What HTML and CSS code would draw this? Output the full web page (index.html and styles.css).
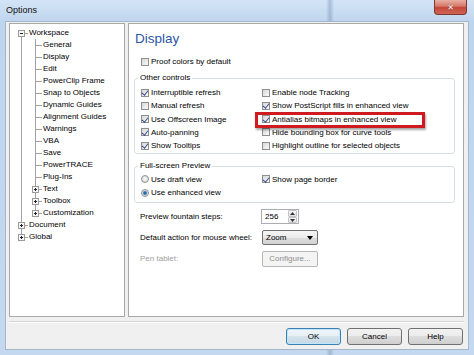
FILE: index.html
```html
<!DOCTYPE html>
<html>
<head>
<meta charset="utf-8">
<title>Options</title>
<link rel="stylesheet" href="styles.css">
</head>
<body>
<div class="window">
  <div class="titlebar">
    <span class="title">Options</span>
    <div class="close"><span>✕</span></div>
  </div>
  <div class="client">
    <div class="main">
      <div class="tree">
        <div class="row"><span class="cell c-first"><span class="exp minus"></span></span><span class="lbl">Workspace</span></div>
        <div class="row"><span class="cell c-i"></span><span class="cell c-t"></span><span class="lbl">General</span></div>
        <div class="row"><span class="cell c-i"></span><span class="cell c-t"></span><span class="lbl">Display</span></div>
        <div class="row"><span class="cell c-i"></span><span class="cell c-t"></span><span class="lbl">Edit</span></div>
        <div class="row"><span class="cell c-i"></span><span class="cell c-t"></span><span class="lbl">PowerClip Frame</span></div>
        <div class="row"><span class="cell c-i"></span><span class="cell c-t"></span><span class="lbl">Snap to Objects</span></div>
        <div class="row"><span class="cell c-i"></span><span class="cell c-t"></span><span class="lbl">Dynamic Guides</span></div>
        <div class="row"><span class="cell c-i"></span><span class="cell c-t"></span><span class="lbl">Alignment Guides</span></div>
        <div class="row"><span class="cell c-i"></span><span class="cell c-t"></span><span class="lbl">Warnings</span></div>
        <div class="row"><span class="cell c-i"></span><span class="cell c-t"></span><span class="lbl">VBA</span></div>
        <div class="row"><span class="cell c-i"></span><span class="cell c-t"></span><span class="lbl">Save</span></div>
        <div class="row"><span class="cell c-i"></span><span class="cell c-t"></span><span class="lbl">PowerTRACE</span></div>
        <div class="row"><span class="cell c-i"></span><span class="cell c-t"></span><span class="lbl">Plug-Ins</span></div>
        <div class="row"><span class="cell c-i"></span><span class="cell c-t"><span class="exp plus"></span></span><span class="lbl">Text</span></div>
        <div class="row"><span class="cell c-i"></span><span class="cell c-t"><span class="exp plus"></span></span><span class="lbl">Toolbox</span></div>
        <div class="row"><span class="cell c-i"></span><span class="cell c-l"><span class="exp plus"></span></span><span class="lbl">Customization</span></div>
        <div class="row"><span class="cell c-t"><span class="exp plus"></span></span><span class="lbl">Document</span></div>
        <div class="row"><span class="cell c-l"><span class="exp plus"></span></span><span class="lbl">Global</span></div>
      </div>

      <div class="panel">
        <h1 class="heading">Display</h1>
        <div class="item proof"><span class="cb"></span>Proof colors by default</div>

        <fieldset class="group other">
          <legend>Other controls</legend>
          <div class="grid">
            <div class="item"><span class="cb on"></span>Interruptible refresh</div>
            <div class="item"><span class="cb"></span>Enable node Tracking</div>
            <div class="item"><span class="cb"></span>Manual refresh</div>
            <div class="item"><span class="cb on"></span>Show PostScript fills in enhanced view</div>
            <div class="item"><span class="cb on"></span>Use Offscreen Image</div>
            <div class="item marked"><span class="cb on"></span>Antialias bitmaps in enhanced view<span class="highlight"></span></div>
            <div class="item"><span class="cb on"></span>Auto-panning</div>
            <div class="item"><span class="cb"></span>Hide bounding box for curve tools</div>
            <div class="item"><span class="cb on"></span>Show Tooltips</div>
            <div class="item"><span class="cb"></span>Highlight outline for selected objects</div>
          </div>
        </fieldset>

        <fieldset class="group preview">
          <legend>Full-screen Preview</legend>
          <div class="grid">
            <div class="item radio-item"><span class="rb"></span>Use draft view</div>
            <div class="item radio-item"><span class="cb on"></span>Show page border</div>
            <div class="item radio-item"><span class="rb on"></span>Use enhanced view</div>
            <div></div>
          </div>
        </fieldset>

        <div class="settings">
          <div class="slabel">Preview fountain steps:</div>
          <div class="spin">
            <span class="spin-val">256</span>
            <span class="spin-btns">
              <span class="sbtn"><svg width="5" height="3" viewBox="0 0 5 3"><path d="M0 3 L2.5 0 L5 3 Z" fill="#333"/></svg></span>
              <span class="sbtn"><svg width="5" height="3" viewBox="0 0 5 3"><path d="M0 0 L2.5 3 L5 0 Z" fill="#333"/></svg></span>
            </span>
          </div>
          <div class="slabel">Default action for mouse wheel:</div>
          <div class="combo"><span>Zoom</span><svg width="6" height="4" viewBox="0 0 6 4"><path d="M0 0 L6 0 L3 4 Z" fill="#000"/></svg></div>
          <div class="slabel disabled">Pen tablet:</div>
          <div class="btn-disabled">Configure...</div>
        </div>
      </div>
    </div>
    <div class="sep"></div>
    <div class="buttons">
      <div class="btn default">OK</div>
      <div class="btn">Cancel</div>
      <div class="btn">Help</div>
    </div>
  </div>
</div>
</body>
</html>
```
FILE: styles.css
```css
* { box-sizing: border-box; }
html, body { margin: 0; padding: 0; }
body {
  width: 474px;
  height: 355px;
  overflow: hidden;
  font-family: "Liberation Sans", Arial, sans-serif;
  font-size: 8px;
  color: #000;
  background:
    linear-gradient(90deg, transparent 326px, rgba(90, 120, 160, 0.35) 330px, transparent 334px),
    linear-gradient(#d3e4f6, #bfd5ee 22px, #c4d9f0);
}
.window { height: 355px; display: flex; flex-direction: column; }

.titlebar {
  height: 21px;
  flex: none;
  display: flex;
  justify-content: space-between;
  align-items: flex-start;
  padding-left: 6px;
}
.title { font-size: 9px; line-height: 21px; color: #111; }
.close {
  width: 33px;
  height: 15px;
  margin-right: 7px;
  border: 1px solid #80362c;
  border-top: none;
  border-radius: 0 0 4px 4px;
  background: linear-gradient(#e7b0a6, #d57767 45%, #c4493a 52%, #cf6454);
  display: flex;
  align-items: center;
  justify-content: center;
  color: #fff;
  font-size: 8px;
  font-weight: bold;
  font-family: "DejaVu Sans", sans-serif;
  text-shadow: 0 0 1px #5a1a10;
}

.client {
  margin: 0 5px;
  height: 329px;
  flex: none;
  border: 1px solid #a3b6cb;
  background: #f0f0f0;
  padding: 1px 4px 0 3px;
  display: flex;
  flex-direction: column;
}
.main { display: flex; gap: 3px; height: 294px; flex: none; }

/* tree */
.tree {
  width: 116px;
  border: 1px solid #a9a9a9;
  background: #fff;
  padding: 3px 0 0 4px;
}
.row { display: flex; height: 12px; }
.cell { width: 14px; height: 12px; flex: none; display: flex; }
.c-i { background: linear-gradient(#a3a3a3, #a3a3a3) 7px 0 / 1px 12px no-repeat; }
.c-t {
  background:
    linear-gradient(#a3a3a3, #a3a3a3) 7px 0 / 1px 12px no-repeat,
    linear-gradient(#a3a3a3, #a3a3a3) 7px 6px / 7px 1px no-repeat;
}
.c-l {
  background:
    linear-gradient(#a3a3a3, #a3a3a3) 7px 0 / 1px 7px no-repeat,
    linear-gradient(#a3a3a3, #a3a3a3) 7px 6px / 7px 1px no-repeat;
}
.c-first {
  background:
    linear-gradient(#a3a3a3, #a3a3a3) 7px 6px / 1px 6px no-repeat,
    linear-gradient(#a3a3a3, #a3a3a3) 7px 6px / 7px 1px no-repeat;
}
.exp {
  width: 7px;
  height: 7px;
  margin: 3px 0 0 4px;
  border: 1px solid #9a9a9a;
  background-color: #f6f6f6;
}
.exp.minus { background-image: linear-gradient(#222, #222); background-size: 3px 1px; background-position: 1px 2px; background-repeat: no-repeat; }
.exp.plus {
  background-image: linear-gradient(#222, #222), linear-gradient(#222, #222);
  background-size: 3px 1px, 1px 3px;
  background-position: 1px 2px, 2px 1px;
  background-repeat: no-repeat;
}
.lbl { margin-left: 1px; line-height: 12px; white-space: nowrap; }

/* panel */
.panel {
  width: 336px;
  border: 1px solid #a9a9a9;
  background: #fff;
  padding: 7px 8px 0 5px;
}
.heading {
  margin: 0 0 8px 1px;
  font-size: 13.5px;
  line-height: 16px;
  font-weight: normal;
  color: #2b56a6;
}
.item { display: flex; align-items: center; height: 13.25px; white-space: nowrap; }
.proof { height: 13px; margin-left: 7px; }
.cb {
  width: 8px;
  height: 8px;
  flex: none;
  margin-right: 2px;
  border: 1px solid #8e8f8f;
  background: linear-gradient(135deg, #d6d6d6, #fbfbfb);
  display: flex;
  justify-content: center;
}
.cb.on::after {
  content: "";
  width: 2.5px;
  height: 5px;
  margin-top: -0.5px;
  border: solid #33488a;
  border-width: 0 1.5px 1.5px 0;
  transform: rotate(38deg);
}
.rb {
  width: 8px;
  height: 8px;
  flex: none;
  margin-right: 2px;
  border: 1px solid #8e8f8f;
  border-radius: 50%;
  background: radial-gradient(circle at 50% 50%, #fafafa, #d4d4d4);
}
.rb.on {
  background: radial-gradient(circle at 50% 50%, #1d4f8e 0, #3a78b8 1.3px, #9bbde0 2.2px, #ececec 2.8px);
}

.group {
  margin: 0;
  border: 1px solid #d5dfe5;
  border-radius: 3px;
  min-width: 0;
}
.group legend {
  padding: 0 2px;
  margin-left: -3px;
  line-height: 12px;
  font-size: 8px;
}
.other { margin-top: 4px; padding: 2px 0 1px 6px; }
.preview { margin-top: 6px; padding: 0 0 3px 6px; }
.preview .item { height: 13.5px; }
.grid { display: grid; grid-template-columns: 121px 1fr; }

.marked { position: relative; }
.highlight {
  position: absolute;
  left: -7px;
  top: -1px;
  width: 170px;
  height: 16px;
  border: 3px solid #cf1a1f;
  box-shadow: 1px 2px 2px rgba(0, 0, 0, 0.35);
}

.settings {
  display: grid;
  grid-template-columns: 122px auto;
  grid-auto-rows: 21px;
  align-items: center;
  justify-items: start;
  margin: 3px 0 0 6px;
}
.slabel { white-space: nowrap; }
.disabled { color: #a0a0a0; }
.spin {
  width: 38px;
  height: 15px;
  margin-left: -1px;
  border: 1px solid #abadb3;
  background: #fff;
  display: flex;
  justify-content: space-between;
  align-items: stretch;
}
.spin-val { padding-left: 3px; line-height: 13px; }
.spin-btns { width: 10px; display: flex; flex-direction: column; padding: 0 1px 0 0; }
.sbtn {
  flex: 1;
  border: 1px solid #c4c4c4;
  border-radius: 1px;
  background: linear-gradient(#f7f7f7, #e2e2e2);
  display: flex;
  align-items: center;
  justify-content: center;
}
.combo {
  width: 56px;
  height: 15px;
  border: 1px solid #707070;
  border-radius: 2px;
  background: linear-gradient(#f4f4f4, #ebebeb 50%, #dddddd 50%, #d2d2d2);
  display: flex;
  align-items: center;
  justify-content: space-between;
  padding: 0 4px 0 3px;
}
.btn-disabled {
  width: 56px;
  height: 16px;
  border: 1px solid #b4b8bb;
  border-radius: 2px;
  background: #f4f4f4;
  color: #8d8d8d;
  display: flex;
  align-items: center;
  justify-content: center;
}

.sep {
  margin-top: 4px;
  height: 2px;
  flex: none;
  border-top: 1px solid #d5d5d5;
  border-bottom: 1px solid #ffffff;
}
.buttons {
  margin-top: 5px;
  display: flex;
  justify-content: flex-end;
  gap: 6px;
  padding-right: 1px;
}
.btn {
  width: 55px;
  height: 17px;
  border: 1px solid #707070;
  border-radius: 3px;
  background: linear-gradient(#f2f2f2, #ebebeb 50%, #dddddd 50%, #cfcfcf);
  display: flex;
  align-items: center;
  justify-content: center;
}
.btn.default {
  border-color: #3c7fb1;
  box-shadow: inset 0 0 0 1px #bfe6fb;
  background: linear-gradient(#f0f6fa, #e6eff5 50%, #d5e3ec 50%, #c6d8e4);
}
```
